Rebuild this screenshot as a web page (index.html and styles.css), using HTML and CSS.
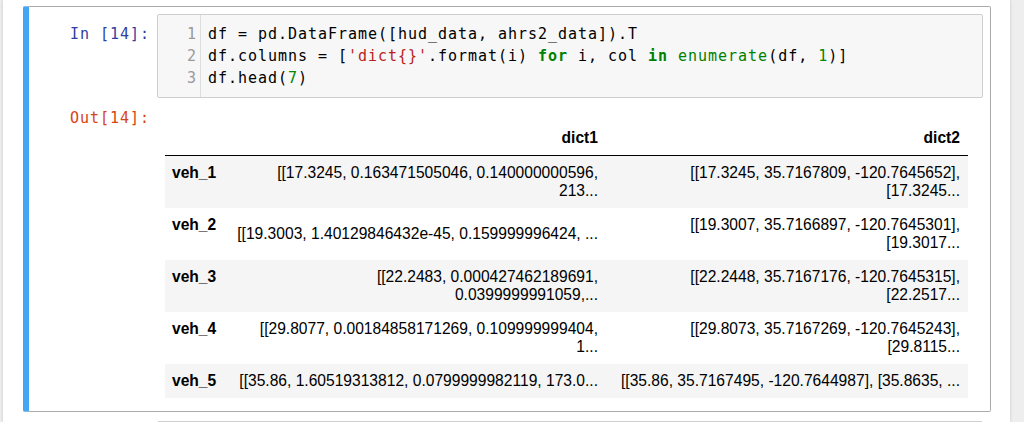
FILE: index.html
```html
<!DOCTYPE html>
<html>
<head>
<meta charset="utf-8">
<link rel="stylesheet" href="styles.css">
</head>
<body>
<div class="notebook">
  <div class="cell selected">
    <div class="input">
      <div class="prompt in-prompt">In&nbsp;[14]:</div>
      <div class="code-box">
        <div class="gutter">
          <div class="ln">1</div>
          <div class="ln">2</div>
          <div class="ln">3</div>
        </div>
        <div class="code">
          <div class="cl">df = pd.DataFrame([hud_data, ahrs2_data]).T</div>
          <div class="cl">df.columns = [<span class="str">'dict{}'</span>.format(i) <span class="kw">for</span> i, col <span class="kw">in</span> <span class="bi">enumerate</span>(df, <span class="num">1</span>)]</div>
          <div class="cl">df.head(<span class="num">7</span>)</div>
        </div>
      </div>
    </div>
    <div class="output">
      <div class="prompt out-prompt">Out[14]:</div>
      <div class="out-sub">
        <table class="dataframe">
          <colgroup>
            <col class="c-idx">
            <col class="c-d1">
            <col class="c-d2">
          </colgroup>
          <thead>
            <tr><th></th><th class="hd">dict1</th><th class="hd">dict2</th></tr>
          </thead>
          <tbody>
            <tr class="odd">
              <th>veh_1</th>
              <td>[[17.3245, 0.163471505046, 0.140000000596,<br>213...</td>
              <td>[[17.3245, 35.7167809, -120.7645652],<br>[17.3245...</td>
            </tr>
            <tr>
              <th>veh_2</th>
              <td>[[19.3003, 1.40129846432e-45, 0.159999996424, ...</td>
              <td>[[19.3007, 35.7166897, -120.7645301],<br>[19.3017...</td>
            </tr>
            <tr class="odd">
              <th>veh_3</th>
              <td>[[22.2483, 0.000427462189691,<br>0.0399999991059,...</td>
              <td>[[22.2448, 35.7167176, -120.7645315],<br>[22.2517...</td>
            </tr>
            <tr>
              <th>veh_4</th>
              <td>[[29.8077, 0.00184858171269, 0.109999999404,<br>1...</td>
              <td>[[29.8073, 35.7167269, -120.7645243],<br>[29.8115...</td>
            </tr>
            <tr class="odd">
              <th>veh_5</th>
              <td>[[35.86, 1.60519313812, 0.0799999982119, 173.0...</td>
              <td>[[35.86, 35.7167495, -120.7644987], [35.8635, ...</td>
            </tr>
          </tbody>
        </table>
      </div>
    </div>
  </div>
  <div class="cell next">
    <div class="input">
      <div class="prompt in-prompt"></div>
      <div class="code-box empty"></div>
    </div>
  </div>
</div>
</body>
</html>
```
FILE: styles.css
```css
html, body {
  margin: 0;
  padding: 0;
  height: 422px;
  overflow: hidden;
}
body {
  background: #eeeeee;
}
.notebook {
  margin-left: 3px;
  width: 1007px;
  height: 422px;
  overflow: hidden;
  background: #ffffff;
  padding-top: 6px;
  box-sizing: border-box;
  box-shadow: 0 0 3px rgba(87, 87, 87, 0.25);
}
.cell {
  margin-left: 20px;
  width: 968px;
  box-sizing: border-box;
  border: 1px solid transparent;
  border-left: 6px solid transparent;
  border-radius: 2px;
  padding: 7px 7px 0 0;
}
.cell.selected {
  border-color: #ababab;
  border-left-color: #42a5f5;
}
.cell.next {
  padding-top: 8px;
}
.input, .output {
  display: flex;
  align-items: flex-start;
}
.prompt {
  width: 128px;
  flex: none;
  box-sizing: border-box;
  padding: 9px 7px 0 0;
  text-align: right;
  font-family: "DejaVu Sans Mono", monospace;
  font-size: 15px;
  letter-spacing: 0.97px;
  line-height: 22px;
}
.in-prompt { color: #303f9f; }
.out-prompt { color: #d84315; }
.code-box {
  flex: 1;
  display: flex;
  background: #f7f7f7;
  border: 1px solid #cfcfcf;
  border-radius: 2px;
  height: 84px;
  box-sizing: border-box;
  font-family: "DejaVu Sans Mono", monospace;
  font-size: 15px;
  letter-spacing: 0.97px;
  line-height: 22px;
  color: #000;
}
.gutter {
  width: 43px;
  flex: none;
  border-right: 1px solid #dddddd;
  padding: 8px 3px 0 0;
  box-sizing: border-box;
  text-align: right;
  color: #999999;
}
.code {
  padding: 8px 0 0 7px;
}
.cl {
  white-space: pre;
}
.str { color: #ba2121; }
.kw { color: #008000; font-weight: bold; }
.bi { color: #008000; }
.num { color: #008800; }

.out-sub {
  flex: 1;
}
.dataframe {
  margin: 23px 0 13px 8px;
  border-collapse: collapse;
  border-spacing: 0;
  table-layout: fixed;
  width: 803px;
  font-family: "Liberation Sans", Arial, sans-serif;
  font-size: 15.6px;
  line-height: 18px;
  color: #000;
}
.c-idx { width: 64px; }
.c-d1 { width: 377px; }
.c-d2 { width: 362px; }
.dataframe th, .dataframe td {
  padding: 8px 8px 8px 7px;
  white-space: nowrap;
}
.dataframe thead th {
  font-weight: bold;
  text-align: right;
  border-bottom: 1px solid #000;
  vertical-align: bottom;
}
.dataframe tbody th {
  font-weight: bold;
  text-align: left;
  vertical-align: top;
}
.dataframe td {
  text-align: right;
  vertical-align: middle;
}
.dataframe tr.odd {
  background: #f5f5f5;
}
```
